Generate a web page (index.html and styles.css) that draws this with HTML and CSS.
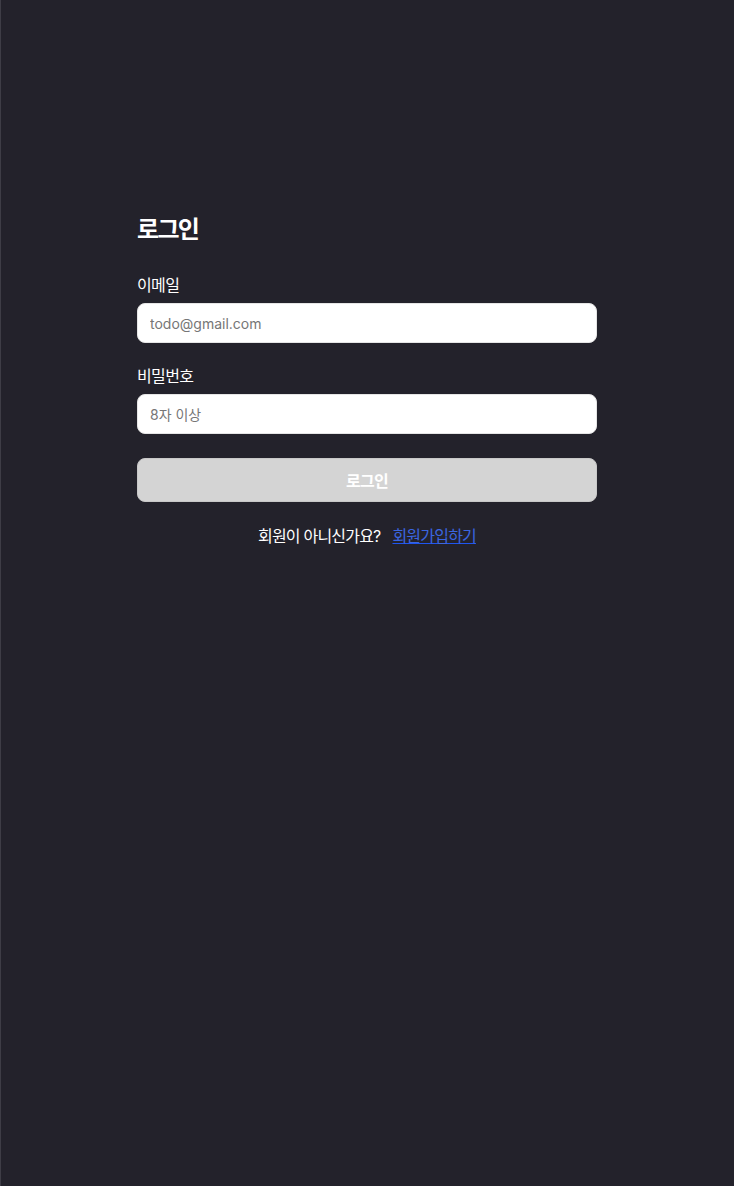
FILE: index.html
```html
<!DOCTYPE html>
<html lang="ko">
<head>
<meta charset="utf-8">
<title>로그인</title>
<link rel="stylesheet" href="styles.css">
</head>
<body>
<main class="page">
  <form class="login">
    <h1 class="title">로그인</h1>
    <div class="field">
      <label class="label" for="email">이메일</label>
      <input class="input" id="email" type="email" placeholder="todo@gmail.com">
    </div>
    <div class="field">
      <label class="label" for="pw">비밀번호</label>
      <input class="input" id="pw" type="password" placeholder="8자 이상">
    </div>
    <button class="submit" type="button">로그인</button>
    <p class="footer">회원이 아니신가요?<a class="link" href="#">회원가입하기</a></p>
  </form>
</main>
</body>
</html>
```
FILE: styles.css
```css
* { box-sizing: border-box; }
html, body { margin: 0; padding: 0; height: 100%; }
body {
  background: #23222b;
  font-family: Inter, "Noto Sans CJK KR", sans-serif;
  color: #ffffff;
}
.page {
  min-height: 100%;
  border-left: 1px solid #3e3d46;
  display: flex;
  justify-content: center;
  padding-top: 215px;
  padding-right: 1px;
}
.login {
  width: 460px;
  display: flex;
  flex-direction: column;
}
.title {
  margin: 0 0 29px;
  font-size: 24px;
  line-height: 29px;
  font-weight: 700;
  letter-spacing: -0.07em;
}
.field {
  display: flex;
  flex-direction: column;
  gap: 6px;
  margin-bottom: 21px;
}
.field + .field { margin-bottom: 24px; }
.label {
  font-size: 16px;
  line-height: 24px;
  letter-spacing: -0.04em;
}
.input {
  height: 40px;
  border: 1px solid #e5e5e5;
  border-radius: 8px;
  background: #ffffff;
  padding: 0 12px;
  font-family: Inter, "Noto Sans CJK KR", sans-serif;
  font-size: 14px;
  color: #222;
  outline: none;
}
.input::placeholder { color: #767676; }
.submit {
  height: 44px;
  border: 1px solid #c8c8c8;
  border-radius: 8px;
  background: #d4d4d4;
  color: #ffffff;
  font-family: Inter, "Noto Sans CJK KR", sans-serif;
  font-size: 16px;
  font-weight: 700;
  letter-spacing: -0.04em;
  margin-bottom: 22px;
}
.footer {
  margin: 0;
  text-align: center;
  font-size: 16px;
  line-height: 24px;
  letter-spacing: -0.05em;
}
.link {
  margin-left: 12px;
  color: #3b66e0;
  text-decoration: underline;
  text-decoration-color: #1f55f0;
}
```
